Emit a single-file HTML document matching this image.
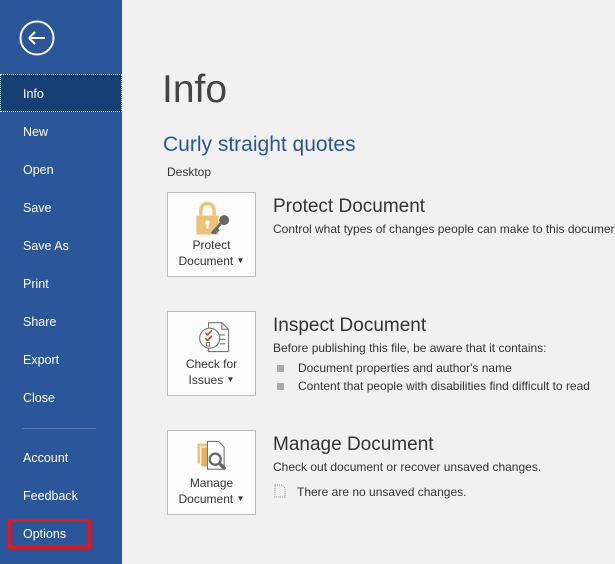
<!DOCTYPE html>
<html><head><style>
*{margin:0;padding:0;box-sizing:border-box}
body{width:615px;height:564px;overflow:hidden;background:#f1f1f1;font-family:"Liberation Sans",sans-serif;position:relative}
.side{position:absolute;left:0;top:0;width:122px;height:564px;background:#2b579a;color:#fff}
.it{position:absolute;left:23px;font-size:12.5px;color:#fff}
.sel{position:absolute;left:0;top:74px;width:122px;height:38px;background:#173f75;border:1px dotted #fff}
.a{position:absolute;color:#444}
.box{position:absolute;left:167px;width:89px;height:85px;background:#fdfdfd;border:1px solid #bbb;text-align:center;font-size:12px;color:#333;line-height:16px}
.box .l{position:absolute;left:0;right:0;top:44px}
.box .ar{font-size:8px;vertical-align:2px}
h2{position:absolute;left:273px;font-weight:normal;font-size:19px;color:#333}
.d{position:absolute;left:273px;font-size:12px;color:#333}
.sq{display:inline-block;width:7px;height:7px;background:#aaa;margin-right:14px;margin-left:4px}
</style></head><body>
<div class="side">
<svg style="position:absolute;left:19px;top:20px" width="36" height="36" viewBox="0 0 36 36"><circle cx="18" cy="18" r="16.5" fill="none" stroke="#fff" stroke-width="2"/><path d="M10 18H26M10 18L16 12M10 18L16 24" fill="none" stroke="#fff" stroke-width="2"/></svg>
<div class="sel"></div>
<div class="it" style="top:87px">Info</div>
<div class="it" style="top:125px">New</div>
<div class="it" style="top:163px">Open</div>
<div class="it" style="top:201px">Save</div>
<div class="it" style="top:239px">Save As</div>
<div class="it" style="top:277px">Print</div>
<div class="it" style="top:315px">Share</div>
<div class="it" style="top:353px">Export</div>
<div class="it" style="top:391px">Close</div>
<div style="position:absolute;left:22px;top:428px;width:74px;height:1px;background:#5a7db5"></div>
<div class="it" style="top:451px">Account</div>
<div class="it" style="top:489px">Feedback</div>
<div class="it" style="top:527px">Options</div>
<div style="position:absolute;left:8px;top:519px;width:83px;height:30px;border:3px solid #e8141e"></div>
</div>
<div class="a" style="left:162px;top:68px;font-size:39px;color:#444">Info</div>
<div class="a" style="left:163px;top:133px;font-size:21px;color:#2b579a">Curly straight quotes</div>
<div class="a" style="left:167px;top:165px;font-size:12px;color:#333">Desktop</div>

<div class="box" style="top:192px">
<svg style="position:absolute;left:25px;top:6px" width="40" height="40" viewBox="0 0 36 36"><path d="M7 15V10a6 6 0 0 1 12 0v5" fill="none" stroke="#eec279" stroke-width="3"/><rect x="3" y="15" width="20" height="17" fill="#eec279"/><circle cx="13" cy="21" r="2" fill="#fff"/><rect x="12" y="21" width="2" height="6" fill="#fff"/><circle cx="28" cy="19" r="4.5" fill="#666"/><path d="M25 22L17 31M19 29l2 2M21 27l2 2" stroke="#666" stroke-width="2.5"/></svg>
<div class="l">Protect<br>Document <span class="ar">▼</span></div></div>
<h2 style="top:196px">Protect Document</h2>
<div class="d" style="top:222px;white-space:nowrap">Control what types of changes people can make to this document.</div>

<div class="box" style="top:311px">
<svg style="position:absolute;left:25px;top:4px" width="40" height="40" viewBox="0 0 36 36"><path d="M14 6h12l6 6v20H14z" fill="#fff" stroke="#777"/><path d="M26 6v6h6M24 17h5M24 21h5M24 25h5" stroke="#777" fill="none"/><circle cx="15" cy="20" r="9" fill="#fff" stroke="#777"/><path d="M11 15l2 2 4-4M11 20l2 2 4-4" stroke="#d24726" fill="none" stroke-width="1.5"/><rect x="12" y="24" width="3" height="3" fill="none" stroke="#777"/></svg>
<div class="l">Check for<br>Issues <span class="ar">▼</span></div></div>
<h2 style="top:315px">Inspect Document</h2>
<div class="d" style="top:341px">Before publishing this file, be aware that it contains:</div>
<div class="d" style="top:361px"><span class="sq"></span>Document properties and author's name</div>
<div class="d" style="top:379px"><span class="sq"></span>Content that people with disabilities find difficult to read</div>

<div class="box" style="top:430px">
<svg style="position:absolute;left:25px;top:6px" width="40" height="40" viewBox="0 0 36 36"><rect x="4" y="6" width="12" height="18" fill="#eec279"/><rect x="7" y="9" width="12" height="18" fill="#e9b055" stroke="#fff"/><path d="M13 4h10l5 5v20H13z" fill="#fff" stroke="#777"/><circle cx="20" cy="20" r="5" fill="#fff" stroke="#666" stroke-width="2"/><path d="M24 24l5 5" stroke="#666" stroke-width="3"/></svg>
<div class="l">Manage<br>Document <span class="ar">▼</span></div></div>
<h2 style="top:434px">Manage Document</h2>
<div class="d" style="top:460px">Check out document or recover unsaved changes.</div>
<div class="d" style="top:484px"><svg width="14" height="14" style="vertical-align:-2px;margin-right:10px"><path d="M2 1h7l3 3v9H2z" fill="none" stroke="#888" stroke-dasharray="1 1"/></svg>There are no unsaved changes.</div>
</body></html>
